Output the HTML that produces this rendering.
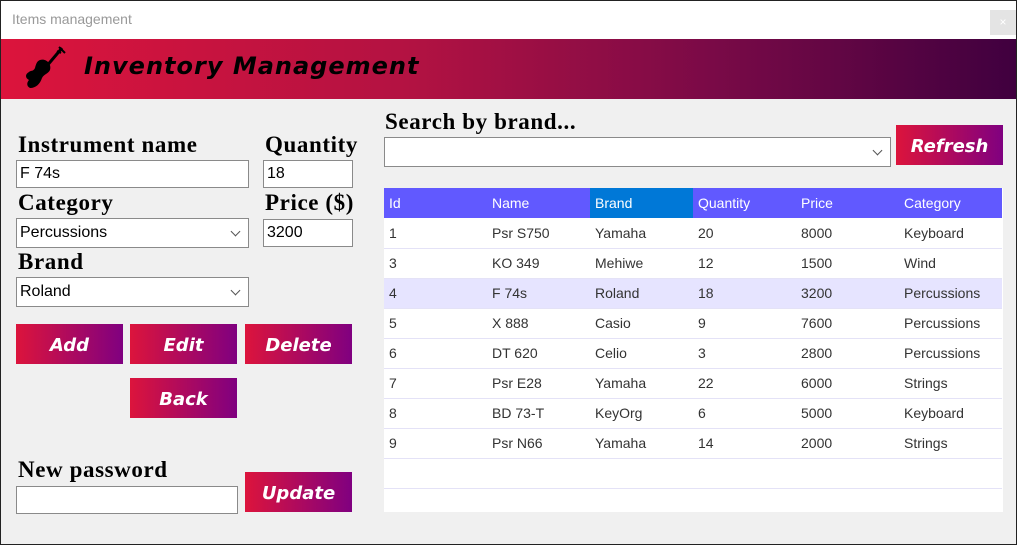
<!DOCTYPE html>
<html><head><meta charset="utf-8"><style>
*{box-sizing:border-box;margin:0;padding:0}
body{width:1017px;height:545px;background:#f0f0f0;position:relative;overflow:hidden;font-family:"Liberation Sans",sans-serif}
.a{position:absolute}
.frame{left:0;top:0;width:1017px;height:545px;border:1px solid #222;pointer-events:none}
.title{left:0;top:0;width:1017px;height:39px;background:#fff}
.lbl{font-family:"Liberation Serif",serif;font-weight:bold;font-size:23px;letter-spacing:0.6px;color:#000;line-height:24px}
.in{background:#fff;border:1px solid #8a8a8a;font-size:16px;padding:3px 3px;line-height:20px;color:#000}
.cb{background:#fff;border:1px solid #8a8a8a;font-size:16px;padding:4px 3px;line-height:20px}
.cb:after{content:"";position:absolute;right:9px;top:9px;width:6px;height:6px;border-right:1px solid #555;border-bottom:1px solid #555;transform:rotate(45deg)}
.btn{background:linear-gradient(90deg,#dc143c,#800080);color:#fff;font-family:"DejaVu Sans",sans-serif;font-style:italic;font-weight:bold;font-size:18px;display:flex;align-items:center;justify-content:center;padding-top:3px}
table{border-collapse:collapse;font-size:14px;color:#333}
td,th{height:30px;padding:0 0 0 5px;text-align:left;font-weight:normal;width:103px;border-bottom:1px solid #e4e2f7}
th{background:#6159ff;color:#fff;border:none}
</style></head><body>
<div class="a title"></div>
<div class="a" style="left:12px;top:11px;font-size:14px;color:#999">Items management</div>
<div class="a" style="left:990px;top:10px;width:26px;height:25px;background:#e4e4e4;color:#fff;font-size:12px;text-align:center;line-height:25px">×</div>
<div class="a" style="left:1px;top:39px;width:1015px;height:60px;background:linear-gradient(90deg,#dc143c 0%,#b31242 40%,#7a0a47 70%,#40003f 100%)"></div>
<svg class="a" style="left:18px;top:44px" width="50" height="50" viewBox="0 0 50 50">
<path d="M44 4 L22 30" stroke="#000" stroke-width="3"/><path d="M41 3l6 6M39 7l4 2" stroke="#000" stroke-width="2"/>
<path d="M22 16c6-2 12 4 10 10c-2 4-6 4-8 8c-2 6-6 10-12 10c-4-2-3-6-1-8c-4-2-4-6 0-8c2-2 4 0 6-4c1-4 2-7 5-8z" fill="#000"/>
</svg>
<div class="a" style="left:84px;top:52px;font-family:'DejaVu Sans',sans-serif;font-style:italic;font-weight:bold;font-size:24px;letter-spacing:1px;color:#000">Inventory  Management</div>

<div class="a lbl" style="left:18px;top:133px">Instrument name</div>
<div class="a lbl" style="left:265px;top:133px">Quantity</div>
<div class="a in" style="left:16px;top:160px;width:233px;height:28px">F 74s</div>
<div class="a in" style="left:263px;top:160px;width:90px;height:28px">18</div>
<div class="a lbl" style="left:18px;top:191px">Category</div>
<div class="a lbl" style="left:265px;top:191px">Price ($)</div>
<div class="a cb" style="left:16px;top:218px;width:233px;height:30px">Percussions</div>
<div class="a in" style="left:263px;top:219px;width:90px;height:28px">3200</div>
<div class="a lbl" style="left:18px;top:250px">Brand</div>
<div class="a cb" style="left:16px;top:277px;width:233px;height:30px">Roland</div>

<div class="a btn" style="left:16px;top:324px;width:107px;height:40px">Add</div>
<div class="a btn" style="left:130px;top:324px;width:107px;height:40px">Edit</div>
<div class="a btn" style="left:245px;top:324px;width:107px;height:40px">Delete</div>
<div class="a btn" style="left:130px;top:378px;width:107px;height:40px">Back</div>
<div class="a lbl" style="left:18px;top:458px">New password</div>
<div class="a in" style="left:16px;top:486px;width:222px;height:28px"></div>
<div class="a btn" style="left:245px;top:472px;width:107px;height:40px">Update</div>

<div class="a lbl" style="left:385px;top:110px">Search by brand...</div>
<div class="a cb" style="left:384px;top:137px;width:507px;height:30px"></div>
<div class="a btn" style="left:896px;top:125px;width:107px;height:40px">Refresh</div>

<div class="a" style="left:384px;top:188px;width:619px;height:324px;background:#fff">
<table>
<tr><th>Id</th><th>Name</th><th style="background:#0078d7">Brand</th><th>Quantity</th><th>Price</th><th>Category</th></tr>
<tr><td>1</td><td>Psr S750</td><td>Yamaha</td><td>20</td><td>8000</td><td>Keyboard</td></tr>
<tr><td>3</td><td>KO 349</td><td>Mehiwe</td><td>12</td><td>1500</td><td>Wind</td></tr>
<tr style="background:#e6e4ff"><td>4</td><td>F 74s</td><td>Roland</td><td>18</td><td>3200</td><td>Percussions</td></tr>
<tr><td>5</td><td>X 888</td><td>Casio</td><td>9</td><td>7600</td><td>Percussions</td></tr>
<tr><td>6</td><td>DT 620</td><td>Celio</td><td>3</td><td>2800</td><td>Percussions</td></tr>
<tr><td>7</td><td>Psr E28</td><td>Yamaha</td><td>22</td><td>6000</td><td>Strings</td></tr>
<tr><td>8</td><td>BD 73-T</td><td>KeyOrg</td><td>6</td><td>5000</td><td>Keyboard</td></tr>
<tr><td>9</td><td>Psr N66</td><td>Yamaha</td><td>14</td><td>2000</td><td>Strings</td></tr>
<tr><td></td><td></td><td></td><td></td><td></td><td></td></tr>
</table>
</div>
<div class="a frame"></div>
</body></html>
